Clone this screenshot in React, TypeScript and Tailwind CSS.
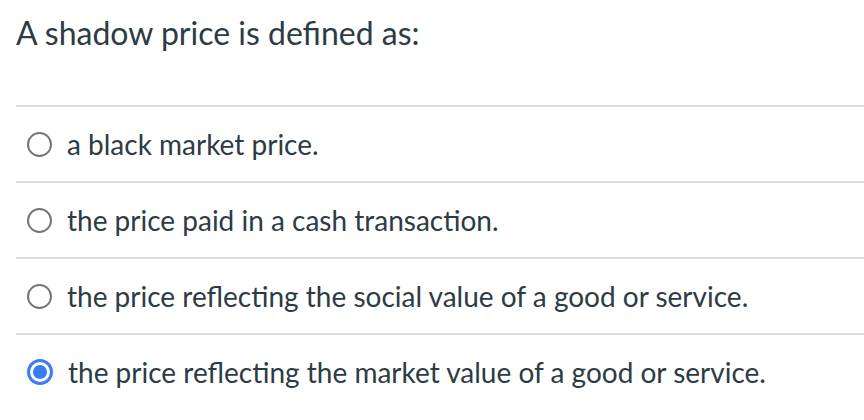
import React from 'react'

const options = [
  'a black market price.',
  'the price paid in a cash transaction.',
  'the price reflecting the social value of a good or service.',
  'the price reflecting the market value of a good or service.',
]

const selected = 3

function Radio({ checked }: { checked: boolean }) {
  if (checked) {
    return (
      <span className="flex h-[26px] w-[26px] shrink-0 items-center justify-center rounded-full border-[3px] border-[#3b7cf5] bg-white">
        <span className="h-[14px] w-[14px] rounded-full bg-[#3b7cf5]" />
      </span>
    )
  }
  return <span className="h-[25px] w-[25px] shrink-0 rounded-full border-2 border-[#767676] bg-white" />
}

export default function App() {
  return (
    <div className="h-[420px] w-[864px] overflow-hidden bg-white pl-4 pt-[14px] font-['Lato',sans-serif] text-[#2d3b45]">
      <h1 className="text-[32px] leading-[38px]">A shadow price is defined as:</h1>
      <div className="mt-[53px]">
        {options.map((label, i) => (
          <label key={i} className="flex h-[76px] items-center border-t-2 border-[#dddddd] pl-[11px]">
            <Radio checked={i === selected} />
            <span className="ml-[15px] text-[28px] leading-[34px]">{label}</span>
          </label>
        ))}
      </div>
    </div>
  )
}
